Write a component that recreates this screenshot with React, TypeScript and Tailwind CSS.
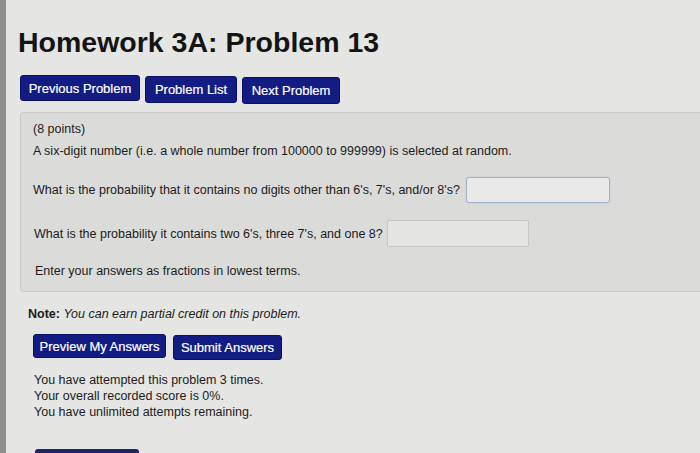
import React from 'react';

const navBtn =
  'bg-[#131c82] text-white text-[13px] font-normal rounded-[3px] border border-[#0b1160] leading-none [-webkit-text-stroke:0.2px_white]';

export default function App() {
  return (
    <div className="flex w-[700px] h-[453px] overflow-hidden bg-[#e5e5e3] font-['Liberation_Sans',Arial,sans-serif] text-[#1c1c1c]">
      {/* edge of the monitor */}
      <div className="w-[6px] shrink-0 bg-[#8f8f8d]" />

      <div className="flex-1 pl-[12px] pt-[25px]">
        <h1 className="text-[28.5px] font-bold leading-[34px] tracking-[0px] text-[#141414]">
          Homework 3A: Problem 13
        </h1>

        <div className="mt-[16px] flex items-start gap-[5px] pl-[2px]">
          <button className={`${navBtn} w-[120px] h-[26px]`}>Previous Problem</button>
          <button className={`${navBtn} w-[92px] h-[27px] mt-[1px]`}>Problem List</button>
          <button className={`${navBtn} w-[98px] h-[27px] mt-[2px]`}>Next Problem</button>
        </div>

        {/* problem well */}
        <div className="mt-[8px] ml-[2px] bg-[#dbdbd9] border border-[#cacac8] border-r-0 rounded-l-[4px] h-[180px] pl-[12px] pt-[8px] text-[12.5px] leading-[16px]">
          <p>(8 points)</p>
          <p className="mt-[6px]">
            A six-digit number (i.e. a whole number from 100000 to 999999) is selected at random.
          </p>

          <div className="mt-[18px] flex items-center">
            <span>What is the probability that it contains no digits other than 6's, 7's, and/or 8's?</span>
            <div className="ml-[6px] w-[144px] h-[26px] bg-[#e9e9e7] border border-[#9fb3c8] rounded-[3px] shadow-[0_0_2px_#b7c9db]" />
          </div>

          <div className="mt-[17px] flex items-center pl-[1px]">
            <span>What is the probability it contains two 6's, three 7's, and one 8?</span>
            <div className="ml-[4px] w-[142px] h-[27px] bg-[#e5e5e3] border border-[#c6c6c4] rounded-[2px]" />
          </div>

          <p className="mt-[16px] pl-[2px]">Enter your answers as fractions in lowest terms.</p>
        </div>

        <p className="mt-[14px] pl-[10px] text-[12.5px] leading-[16px]">
          <span className="font-bold">Note:</span> <i>You can earn partial credit on this problem.</i>
        </p>

        <div className="mt-[12px] ml-[15px] flex gap-[7px]">
          <button className={`${navBtn} w-[133px] h-[24px]`}>Preview My Answers</button>
          <button className={`${navBtn} w-[109px] h-[25px] mt-[1px]`}>Submit Answers</button>
        </div>

        <div className="mt-[12px] pl-[16px] text-[12.5px] leading-[16px]">
          <p>You have attempted this problem 3 times.</p>
          <p>Your overall recorded score is 0%.</p>
          <p>You have unlimited attempts remaining.</p>
        </div>

        <div className="mt-[29px] ml-[17px] w-[104px] h-[10px] bg-[#1b2466] rounded-t-[3px]" />
      </div>
    </div>
  );
}
